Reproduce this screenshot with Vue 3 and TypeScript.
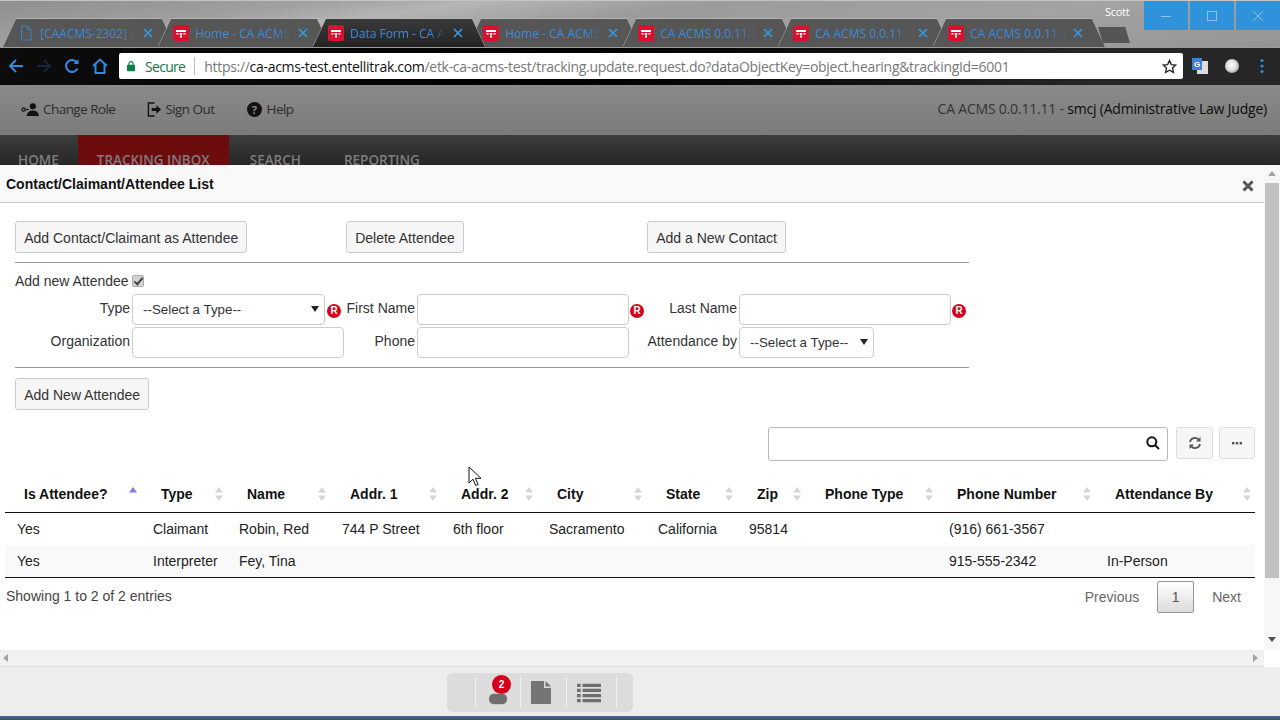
<script setup lang="ts">
interface BrowserTab {
  title: string
  favicon: boolean
  active?: boolean
}

interface Column {
  label: string
  width: number
  sorted?: boolean
}

const tabs: BrowserTab[] = [
  { title: '[CAACMS-2302] C', favicon: false },
  { title: 'Home - CA ACMS', favicon: true },
  { title: 'Data Form - CA A', favicon: true, active: true },
  { title: 'Home - CA ACMS', favicon: true },
  { title: 'CA ACMS 0.0.11.1', favicon: true },
  { title: 'CA ACMS 0.0.11.1', favicon: true },
  { title: 'CA ACMS 0.0.11.1', favicon: true }
]

const columns: Column[] = [
  { label: 'Is Attendee?', width: 136, sorted: true },
  { label: 'Type', width: 86 },
  { label: 'Name', width: 103 },
  { label: 'Addr. 1', width: 111 },
  { label: 'Addr. 2', width: 96 },
  { label: 'City', width: 109 },
  { label: 'State', width: 91 },
  { label: 'Zip', width: 68 },
  { label: 'Phone Type', width: 132 },
  { label: 'Phone Number', width: 158 },
  { label: 'Attendance By', width: 160 }
]

const rows: string[][] = [
  ['Yes', 'Claimant', 'Robin, Red', '744 P Street', '6th floor', 'Sacramento', 'California', '95814', '', '(916) 661-3567', ''],
  ['Yes', 'Interpreter', 'Fey, Tina', '', '', '', '', '', '', '915-555-2342', 'In-Person']
]
</script>

<template>
  <div class="screen">
    <div class="titlebar">
      <div class="tabs">
        <div v-for="(tab, i) in tabs" :key="i" class="tab-edge" :class="{ front: tab.active }">
          <div class="tab" :class="{ active: tab.active }">
            <svg v-if="tab.favicon" class="favicon" viewBox="0 0 16 16">
              <rect width="16" height="16" rx="2" fill="#d8112f" />
              <path d="M3 5h10v2H3zM6.800 8h2.400v2H6.800zM7 10.500h2v2H7zM3.500 8h2v1.500h-2zM10.500 8h2v1.500h-2z" fill="#fff" />
            </svg>
            <svg v-else class="favicon" viewBox="0 0 16 16" fill="none" stroke="#3c7fc4" stroke-width="1">
              <path d="M3.500 1h6l3.500 3.500v10.500h-9.500zM9.500 1v3.500h3.500" />
            </svg>
            <span class="tab-title">{{ tab.title }}</span>
            <svg class="tab-close" viewBox="0 0 10 10" stroke="#2f9be4" stroke-width="1.700">
              <path d="M1 1l8 8M9 1l-8 8" />
            </svg>
          </div>
        </div>
        <div class="new-tab"></div>
      </div>
      <div class="window-area">
        <span class="profile">Scott</span>
        <div class="win-btn">
          <svg viewBox="0 0 12 12" stroke="#8cc4ee"><path d="M1 6.500h10" /></svg>
        </div>
        <div class="win-btn">
          <svg viewBox="0 0 12 12" stroke="#8cc4ee" fill="none"><rect x="1.500" y="1.500" width="9" height="9" /></svg>
        </div>
        <div class="win-btn">
          <svg viewBox="0 0 12 12" stroke="#8cc4ee"><path d="M1 1l10 10M11 1l-10 10" /></svg>
        </div>
      </div>
    </div>

    <div class="toolbar">
      <div class="nav-btn">
        <svg viewBox="0 0 16 16" fill="none" stroke="#2f8ae0" stroke-width="2"><path d="M15 8H2M8 2L2 8l6 6" /></svg>
      </div>
      <div class="nav-btn">
        <svg viewBox="0 0 16 16" fill="none" stroke="#15263a" stroke-width="2"><path d="M1 8h13M8 2l6 6-6 6" /></svg>
      </div>
      <div class="nav-btn">
        <svg viewBox="0 0 16 16" fill="none" stroke="#2f8ae0" stroke-width="2"><path d="M13.500 10.500A6 6 0 1 1 13 4.500" /><path d="M14.500 1v5h-5z" fill="#2f8ae0" stroke="none" /></svg>
      </div>
      <div class="nav-btn">
        <svg viewBox="0 0 16 16" fill="none" stroke="#2f8ae0" stroke-width="2"><path d="M1 8l7-6.500L15 8M3.500 6.500V15h9V6.500" /></svg>
      </div>
      <div class="omnibox">
        <svg class="lock" viewBox="0 0 10 14">
          <path d="M2.500 6V4a2.500 2.500 0 0 1 5 0v2" fill="none" stroke="#0b8043" stroke-width="1.400" />
          <rect y="5.500" width="10" height="8" rx="1" fill="#0b8043" />
        </svg>
        <span class="secure">Secure</span>
        <span class="omni-sep"></span>
        <span class="url"><span class="url-dim">https://</span>ca-acms-test.entellitrak.com<span class="url-dim">/etk-ca-acms-test/tracking.update.request.do?dataObjectKey=object.hearing&amp;trackingId=6001</span></span>
        <svg class="star" viewBox="0 0 16 16" fill="none" stroke="#222" stroke-width="1.400">
          <path d="M8 1.500l2 4.400 4.700.5-3.500 3.200 1 4.700L8 11.900l-4.200 2.400 1-4.700L1.300 6.400 6 5.900z" />
        </svg>
      </div>
      <div class="ext-icons">
        <svg class="ext translate" viewBox="0 0 16 16">
          <rect x="5" y="3" width="11" height="13" fill="#ddd" />
          <rect width="10" height="12" fill="#3f7fe0" />
          <text x="5" y="9" text-anchor="middle" font-size="8" font-weight="700" fill="#fff" font-family="Liberation Sans, sans-serif">G</text>
        </svg>
        <span class="ext orb"></span>
        <svg class="ext dots" viewBox="0 0 4 16" fill="#2f8ae0">
          <circle cx="2" cy="2.500" r="1.600" />
          <circle cx="2" cy="8" r="1.600" />
          <circle cx="2" cy="13.500" r="1.600" />
        </svg>
      </div>
    </div>

    <header class="app-header">
      <a class="head-link">
        <svg viewBox="0 0 20 14" class="head-icon">
          <circle cx="12.500" cy="3.500" r="3.300" fill="#111" />
          <path d="M6 14c0-4 3-6 6.500-6s6.500 2 6.500 6z" fill="#111" />
          <circle cx="2.600" cy="7" r="1.800" fill="none" stroke="#111" stroke-width="1.200" />
          <path d="M4.400 7h3.800" stroke="#111" stroke-width="1.200" />
        </svg>
        Change Role
      </a>
      <a class="head-link signout">
        <svg viewBox="0 0 16 16" class="head-icon small" fill="none" stroke="#111" stroke-width="1.500">
          <path d="M8 1H1.500v14H8" />
          <path d="M5 6.500h5V3.500l5 4.500-5 4.500v-3H5z" fill="#111" stroke="none" />
        </svg>
        Sign Out
      </a>
      <a class="head-link help">
        <span class="help-icon">?</span>
        Help
      </a>
      <div class="app-info">CA ACMS 0.0.11.11 - <span class="app-user">smcj (Administrative Law Judge)</span></div>
    </header>

    <nav class="app-nav">
      <span class="nav-item">HOME</span>
      <span class="nav-item current">TRACKING INBOX</span>
      <span class="nav-item">SEARCH</span>
      <span class="nav-item">REPORTING</span>
    </nav>

    <section class="modal">
      <div class="modal-main">
        <div class="modal-scroll">
          <div class="modal-title">
            <h1>Contact/Claimant/Attendee List</h1>
            <svg class="modal-close" viewBox="0 0 12 12" stroke="#555" stroke-width="3">
              <path d="M1.500 1.500l9 9M10.500 1.500l-9 9" />
            </svg>
          </div>

          <div class="form-area">
            <div class="action-row">
              <button class="btn">Add Contact/Claimant as Attendee</button>
              <button class="btn">Delete Attendee</button>
              <button class="btn">Add a New Contact</button>
            </div>
            <div class="check-row">
              <span>Add new Attendee</span>
              <input class="check" type="checkbox" checked disabled />
            </div>
            <div class="field-grid">
              <label>Type</label>
              <div class="control">
                <div class="select-wrap">
                  <select class="select wide"><option>--Select a Type--</option></select>
                </div>
                <span class="req">R</span>
              </div>
              <label>First Name</label>
              <div class="control">
                <input class="input" type="text" />
                <span class="req">R</span>
              </div>
              <label>Last Name</label>
              <div class="control">
                <input class="input" type="text" />
                <span class="req">R</span>
              </div>
              <label>Organization</label>
              <div class="control">
                <input class="input" type="text" />
              </div>
              <label>Phone</label>
              <div class="control">
                <input class="input" type="text" />
              </div>
              <label>Attendance by</label>
              <div class="control">
                <div class="select-wrap">
                  <select class="select narrow"><option>--Select a Type--</option></select>
                </div>
              </div>
            </div>
            <div class="add-row">
              <button class="btn">Add New Attendee</button>
            </div>
          </div>

          <div class="table-tools">
            <div class="search-box">
              <svg viewBox="0 0 14 14" fill="none" stroke="#111" stroke-width="2">
                <circle cx="5.800" cy="5.800" r="4.500" />
                <path d="M9 9l4 4" />
              </svg>
            </div>
            <button class="tool-btn">
              <svg viewBox="0 0 14 14" fill="none" stroke="#555" stroke-width="1.800">
                <path d="M2 6a5 5 0 0 1 9-2M12 8a5 5 0 0 1-9 2" />
                <path d="M12.500 1v4.500H8zM1.500 13V8.500H6z" fill="#555" stroke="none" />
              </svg>
            </button>
            <button class="tool-btn more">
              <svg viewBox="0 0 12 4" fill="#555">
                <rect x="1" y="1" width="2.400" height="2.400" />
                <rect x="4.800" y="1" width="2.400" height="2.400" />
                <rect x="8.600" y="1" width="2.400" height="2.400" />
              </svg>
            </button>
          </div>

          <table class="grid">
            <colgroup>
              <col v-for="col in columns" :key="col.label" :style="{ width: col.width + 'px' }" />
            </colgroup>
            <thead>
              <tr>
                <th v-for="col in columns" :key="col.label">
                  {{ col.label }}
                  <svg class="sort" viewBox="0 0 8 14">
                    <path d="M4 0l4 5.500H0z" :fill="col.sorted ? '#8178d8' : '#d6d6d6'" />
                    <path v-if="!col.sorted" d="M4 14L0 8.500h8z" fill="#d6d6d6" />
                  </svg>
                </th>
              </tr>
            </thead>
            <tbody>
              <tr v-for="(row, i) in rows" :key="i">
                <td v-for="(cell, j) in row" :key="j">{{ cell }}</td>
              </tr>
            </tbody>
          </table>

          <div class="table-foot">
            <span class="info">Showing 1 to 2 of 2 entries</span>
            <div class="pager">
              <span class="page-link">Previous</span>
              <span class="page-num">1</span>
              <span class="page-link">Next</span>
            </div>
          </div>
        </div>

        <div class="vbar">
          <span class="arrow up"></span>
          <div class="vthumb"></div>
          <span class="arrow down"></span>
        </div>
      </div>

      <div class="hbar-row">
        <div class="hbar">
          <span class="arrow left"></span>
          <span class="arrow right"></span>
        </div>
        <div class="corner"></div>
      </div>

      <div class="modal-foot">
        <div class="dock">
          <div class="dock-cell first"></div>
          <div class="dock-cell person">
            <svg viewBox="0 0 20 12" class="dock-person"><rect y="0.500" width="19" height="11" rx="5" fill="#6f6f6f" /></svg>
            <span class="badge">2</span>
          </div>
          <div class="dock-cell nudge">
            <svg viewBox="0 0 20 23" class="dock-file"><path d="M0 0h13v7h7v16H0zM14.500 0L20 5.500h-5.500z" fill="#757575" /></svg>
          </div>
          <div class="dock-cell wide nudge">
            <svg viewBox="0 0 26 20" class="dock-list" fill="#6f6f6f">
              <path d="M0 0h4v3.500H0zM6 0h20v3.500H6zM0 5.500h4V9H0zM6 5.500h20V9H6zM0 11h4v3.500H0zM6 11h20v3.500H6zM0 16.500h4V20H0zM6 16.500h20V20H6z" />
            </svg>
          </div>
          <div class="dock-cell last"></div>
        </div>
      </div>
    </section>

    <div class="desktop"></div>

    <svg class="cursor" viewBox="0 0 13 21">
      <path d="M1 1v16l4-3.800 2.700 6.300 2.400-1-2.700-6.200H13z" fill="#fff" stroke="#111" stroke-width="1" />
    </svg>
  </div>
</template>

<style>
html,
body {
  margin: 0;
  overflow: hidden;
}
</style>

<style scoped>
.screen {
  position: relative;
  width: 1280px;
  height: 720px;
  overflow: hidden;
  font-family: "Liberation Sans", Arial, sans-serif;
  font-size: 14px;
  color: #333;
  background: #47587a;
}

/* browser frame */
.titlebar {
  display: flex;
  height: 48px;
  box-sizing: border-box;
  border-top: 1px solid #c4c4c4;
  border-bottom: 1px solid #9c9c9c;
  background: linear-gradient(172deg, #8f8f8f 0%, #a0a0a0 20%, #b5b5b5 30%, #9b9b9b 45%, #a3a3a3 70%, #959595 100%);
}

.tabs {
  display: flex;
  align-self: flex-end;
  flex: none;
  width: 1144px;
  box-sizing: border-box;
  padding-left: 3px;
}

.tab-edge {
  margin-right: -17px;
  filter: drop-shadow(0 -0.5px 0.4px #b5b5b5);
}

.tab-edge.front {
  z-index: 1;
}

.tab {
  display: flex;
  align-items: center;
  width: 172px;
  height: 28px;
  box-sizing: border-box;
  padding-left: 15px;
  background: #565656;
  clip-path: polygon(0 100%, 13px 0, calc(100% - 13px) 0, 100% 100%);
}

.tab.active {
  background: linear-gradient(180deg, #3a3a3a, #232323);
}

.favicon {
  width: 16px;
  height: 16px;
  flex: none;
}

.tab-title {
  width: 100px;
  margin-left: 6px;
  white-space: nowrap;
  font-family: "Open Sans", sans-serif;
  font-size: 12px;
  color: #3f8be0;
  -webkit-mask-image: linear-gradient(90deg, #000 80%, transparent 96%);
  mask-image: linear-gradient(90deg, #000 80%, transparent 96%);
}

.tab-close {
  width: 10px;
  height: 10px;
  margin-left: 3px;
}

.new-tab {
  align-self: flex-end;
  flex: none;
  width: 32px;
  height: 16px;
  margin: 0 0 4px 10px;
  background: #555;
  clip-path: polygon(0 0, 85% 0, 100% 100%, 15% 100%);
}

.window-area {
  display: flex;
  align-items: flex-start;
  flex: none;
}

.profile {
  width: 26px;
  margin: 3px 13px 0 -39px;
  font-family: "Open Sans", sans-serif;
  font-size: 11px;
  letter-spacing: -0.3px;
  color: #fff;
}

.win-btn {
  display: flex;
  align-items: center;
  justify-content: center;
  width: 44px;
  height: 29px;
  margin-right: 2px;
  background: #2f93dc;
}

.win-btn svg {
  width: 12px;
  height: 12px;
}

.toolbar {
  display: flex;
  align-items: center;
  height: 37px;
  box-sizing: border-box;
  padding: 0 0 1px 2px;
  background: linear-gradient(90deg, #0c0c0c, #000 45%, #111 68%, #262626 85%);
}

.nav-btn {
  display: flex;
  justify-content: center;
  width: 28px;
}

.nav-btn svg {
  width: 16px;
  height: 16px;
}

.omnibox {
  display: flex;
  align-items: center;
  width: 1064px;
  height: 26px;
  box-sizing: border-box;
  margin-left: 5px;
  padding: 0 6px 0 8px;
  border-radius: 2px;
  background: #fff;
  font-family: "Open Sans", sans-serif;
  font-size: 14px;
}

.lock {
  width: 8px;
  height: 12px;
  margin-right: 10px;
}

.secure {
  color: #0b7a3f;
  letter-spacing: -0.7px;
}

.omni-sep {
  width: 1px;
  height: 18px;
  margin: 0 9px;
  background: #bbb;
}

.url {
  flex: 1;
  color: #111;
  letter-spacing: -0.3px;
  white-space: nowrap;
}

.url-dim {
  color: #777;
}

.star {
  width: 15px;
  height: 15px;
}

.ext-icons {
  display: flex;
  align-items: center;
  height: 100%;
}

.ext.translate {
  width: 16px;
  height: 16px;
  margin-left: 9px;
}

.ext.orb {
  width: 14px;
  height: 14px;
  margin-left: 17px;
  border-radius: 50%;
  background: radial-gradient(circle at 45% 45%, #fff 0, #ddd 45%, #777 100%);
}

.ext.dots {
  width: 4px;
  height: 16px;
  margin-left: 21px;
}

/* page behind the dialog */
.app-header {
  display: flex;
  align-items: center;
  height: 50px;
  box-sizing: border-box;
  padding: 0 13px 2px 21px;
  background: linear-gradient(180deg, #8a8a8a, #7b7b7b);
  font-family: "Open Sans", sans-serif;
  font-size: 13.500px;
  letter-spacing: -0.55px;
  color: #2c2c2c;
}

.head-link {
  display: flex;
  align-items: center;
}

.head-icon {
  width: 19px;
  height: 13px;
  margin-right: 3px;
}

.head-icon.small {
  width: 15px;
  height: 15px;
}

.signout {
  margin-left: 32px;
}

.help {
  margin-left: 32px;
}

.help-icon {
  display: flex;
  align-items: center;
  justify-content: center;
  width: 15px;
  height: 15px;
  margin-right: 5px;
  border-radius: 50%;
  background: #111;
  color: #888;
  font-weight: 700;
  font-size: 11px;
}

.app-info {
  margin: -1px 0 0 auto;
  font-size: 14px;
  letter-spacing: -0.2px;
  color: #333;
}

.app-user {
  color: #0c0c0c;
}

.app-nav {
  display: flex;
  height: 30px;
  overflow: hidden;
  background: linear-gradient(180deg, #3d3d3d, #262626);
  font-family: "Open Sans", sans-serif;
  font-size: 13.500px;
  font-weight: 600;
  color: #7d7d7d;
}

.nav-item {
  height: 50px;
  box-sizing: border-box;
  padding: 16px 22px 0 21px;
}

.nav-item:first-child {
  padding-left: 18px;
  padding-right: 19px;
}

.nav-item.current {
  padding: 16px 19px 0;
  background: #6d0c0d;
}

/* dialog */
.modal {
  display: flex;
  flex-direction: column;
  height: 551px;
  background: #fff;
}

.modal-main {
  display: flex;
  height: 485px;
}

.modal-scroll {
  width: 1264px;
  overflow: hidden;
}

.modal-title {
  display: flex;
  align-items: center;
  justify-content: space-between;
  height: 38px;
  box-sizing: border-box;
  padding: 0 10px 0 6px;
  border-bottom: 1px solid #ccc;
  background: #f9f9f9;
}

.modal-title h1 {
  margin: 0;
  font-size: 14px;
  color: #111;
}

.modal-close {
  width: 12px;
  height: 12px;
  margin-top: 4px;
}

.form-area {
  width: 954px;
  margin-left: 15px;
  padding-top: 18px;
}

.action-row {
  display: grid;
  grid-template-columns: 331px 301px 1fr;
  justify-items: start;
  height: 41px;
  border-bottom: 1px solid #999;
}

.btn {
  height: 32px;
  padding: 2px 8.200px 0;
  border: 1px solid #ccc;
  border-radius: 3px;
  background: #f6f6f6;
  font: inherit;
  color: #333;
}

.check-row {
  display: flex;
  align-items: center;
  height: 31px;
  padding-top: 4px;
  box-sizing: border-box;
}

.check {
  position: relative;
  appearance: none;
  width: 12px;
  height: 12px;
  margin: 0 0 0 3px;
  border: 1px solid #aaa;
  border-radius: 2px;
  background: #d4d4d4;
}

.check::after {
  content: "";
  position: absolute;
  left: 3px;
  top: 0;
  width: 3px;
  height: 7px;
  border: solid #444;
  border-width: 0 2px 2px 0;
  transform: rotate(40deg);
}

.field-grid {
  display: grid;
  grid-template-columns: 117px 214px 71px 230px 92px 230px;
  grid-auto-rows: 30px;
  row-gap: 3px;
  padding-bottom: 10px;
  border-bottom: 1px solid #999;
}

.field-grid label {
  padding: 6px 2px 0 0;
  text-align: right;
  white-space: nowrap;
}

.control {
  display: flex;
  align-items: center;
}

.input {
  width: 212px;
  height: 31px;
  box-sizing: border-box;
  border: 1px solid #ccc;
  border-radius: 4px;
  background: #fff;
}

.select-wrap {
  position: relative;
  display: flex;
}

.select-wrap::after {
  content: "";
  position: absolute;
  right: 6px;
  top: 12px;
  border: 4px solid transparent;
  border-top: 6px solid #222;
  border-bottom: 0;
  pointer-events: none;
}

.select {
  appearance: none;
  height: 31px;
  box-sizing: border-box;
  padding: 1px 0 0 10px;
  border: 1px solid #ccc;
  border-radius: 4px;
  background: #fff;
  font-family: inherit;
  font-size: 13.330px;
  color: #333;
}

.select.wide {
  width: 193px;
}

.select.narrow {
  width: 135px;
}

.req {
  display: flex;
  align-items: center;
  justify-content: center;
  flex: none;
  width: 14px;
  height: 14px;
  margin: 3px 0 0 1px;
  border-radius: 50%;
  background: #d5001c;
  color: #fff;
  font-size: 10px;
  font-weight: 700;
}

.select-wrap + .req {
  margin-left: 2px;
}

.add-row {
  padding-top: 10px;
}

.table-tools {
  display: flex;
  align-items: flex-start;
  justify-content: flex-end;
  gap: 6px;
  margin-top: 17px;
  padding-right: 9px;
}

.search-box {
  display: flex;
  align-items: center;
  justify-content: flex-end;
  width: 400px;
  height: 34px;
  box-sizing: border-box;
  margin-right: 2px;
  padding-right: 7px;
  border: 1px solid #bbb;
  border-radius: 3px;
  background: #fff;
}

.search-box svg {
  width: 14px;
  height: 14px;
  margin-top: -2px;
}

.tool-btn {
  display: flex;
  align-items: center;
  justify-content: center;
  width: 37px;
  height: 32px;
  padding: 0;
  border: 1px solid #ddd;
  border-radius: 3px;
  background: #f6f6f6;
}

.tool-btn svg {
  width: 14px;
  height: 14px;
}

.tool-btn.more {
  width: 36px;
}

.tool-btn.more svg {
  height: 4px;
  width: 12px;
}

.grid {
  width: 1250px;
  margin: 16px 0 0 5px;
  table-layout: fixed;
  border-collapse: collapse;
  border-bottom: 1px solid #111;
}

.grid th {
  position: relative;
  height: 35px;
  box-sizing: border-box;
  padding: 0 20px;
  border-bottom: 1px solid #111;
  text-align: left;
  white-space: nowrap;
  color: #111;
  font-size: 14px;
}

.grid th:first-child {
  padding-left: 19px;
}

.sort {
  position: absolute;
  right: 4px;
  top: 10px;
  width: 8px;
  height: 14px;
}

.grid td {
  height: 32px;
  padding: 0 12px;
  white-space: nowrap;
  color: #222;
}

.grid tbody tr:nth-child(even) {
  background: #f9f9f9;
}

.table-foot {
  display: flex;
  justify-content: space-between;
  margin: 3px 23px 0 6px;
}

.info {
  padding-top: 7px;
  color: #444;
}

.pager {
  display: flex;
  align-items: center;
  height: 32px;
}

.page-link {
  color: #666;
}

.page-num {
  display: flex;
  align-items: center;
  justify-content: center;
  width: 37px;
  height: 32px;
  box-sizing: border-box;
  margin: 0 18px;
  border: 1px solid #979797;
  border-radius: 2px;
  background: linear-gradient(180deg, #fff, #dcdcdc);
  color: #555;
}

/* scrollbars */
.vbar {
  display: flex;
  flex-direction: column;
  align-items: center;
  width: 16px;
  background: #f7f7f7;
}

.vthumb {
  width: 14px;
  height: 395px;
  margin: 7px 0 59px;
  background: #c1c1c1;
}

.arrow {
  width: 0;
  height: 0;
  border: 4px solid transparent;
}

.arrow.up {
  margin-top: 6px;
  border-top: 0;
  border-bottom: 5px solid #a3a3a3;
}

.arrow.down {
  border-bottom: 0;
  border-top: 5px solid #505050;
}

.arrow.left {
  border-left: 0;
  border-right: 5px solid #a3a3a3;
}

.arrow.right {
  border-right: 0;
  border-left: 5px solid #a3a3a3;
}

.hbar-row {
  display: flex;
  height: 17px;
}

.hbar {
  display: flex;
  align-items: center;
  justify-content: space-between;
  width: 1264px;
  box-sizing: border-box;
  padding: 0 6px 0 3px;
  border-bottom: 1px solid #dedede;
  background: #f1f1f1;
}

.corner {
  flex: 1;
  background: #fff;
}

.modal-foot {
  display: flex;
  flex: 1;
  padding: 6px 0 4px 447px;
  background: #eee;
}

.dock {
  display: flex;
  width: 186px;
  border: 1px solid #ddd;
  border-radius: 5px;
  background: #dcdcdc;
  box-sizing: border-box;
}

.dock-cell {
  position: relative;
  display: flex;
  align-items: center;
  justify-content: center;
  width: 46px;
  margin: 3px 0;
  border-right: 1px solid #f1f1f1;
}

.dock-cell.first {
  width: 27px;
}

.dock-cell.person {
  width: 44px;
}

.dock-cell.wide {
  width: 50px;
}

.dock-cell.nudge {
  box-sizing: border-box;
  padding-right: 6px;
}

.dock-cell.last {
  flex: 1;
  border-right: 0;
}

.dock-person {
  width: 19px;
  height: 12px;
  margin-top: 13px;
}

.dock-file {
  width: 20px;
  height: 23px;
}

.dock-list {
  width: 24px;
  height: 20px;
}

.badge {
  position: absolute;
  top: -2px;
  left: 16px;
  display: flex;
  align-items: center;
  justify-content: center;
  width: 19px;
  height: 19px;
  border-radius: 50%;
  background: #d5001c;
  color: #fff;
  font-size: 10px;
  font-weight: 700;
}

.desktop {
  height: 4px;
  background: linear-gradient(180deg, #53668c, #3f4e6e);
}

.cursor {
  position: absolute;
  left: 468px;
  top: 466px;
  width: 13px;
  height: 21px;
}
</style>
